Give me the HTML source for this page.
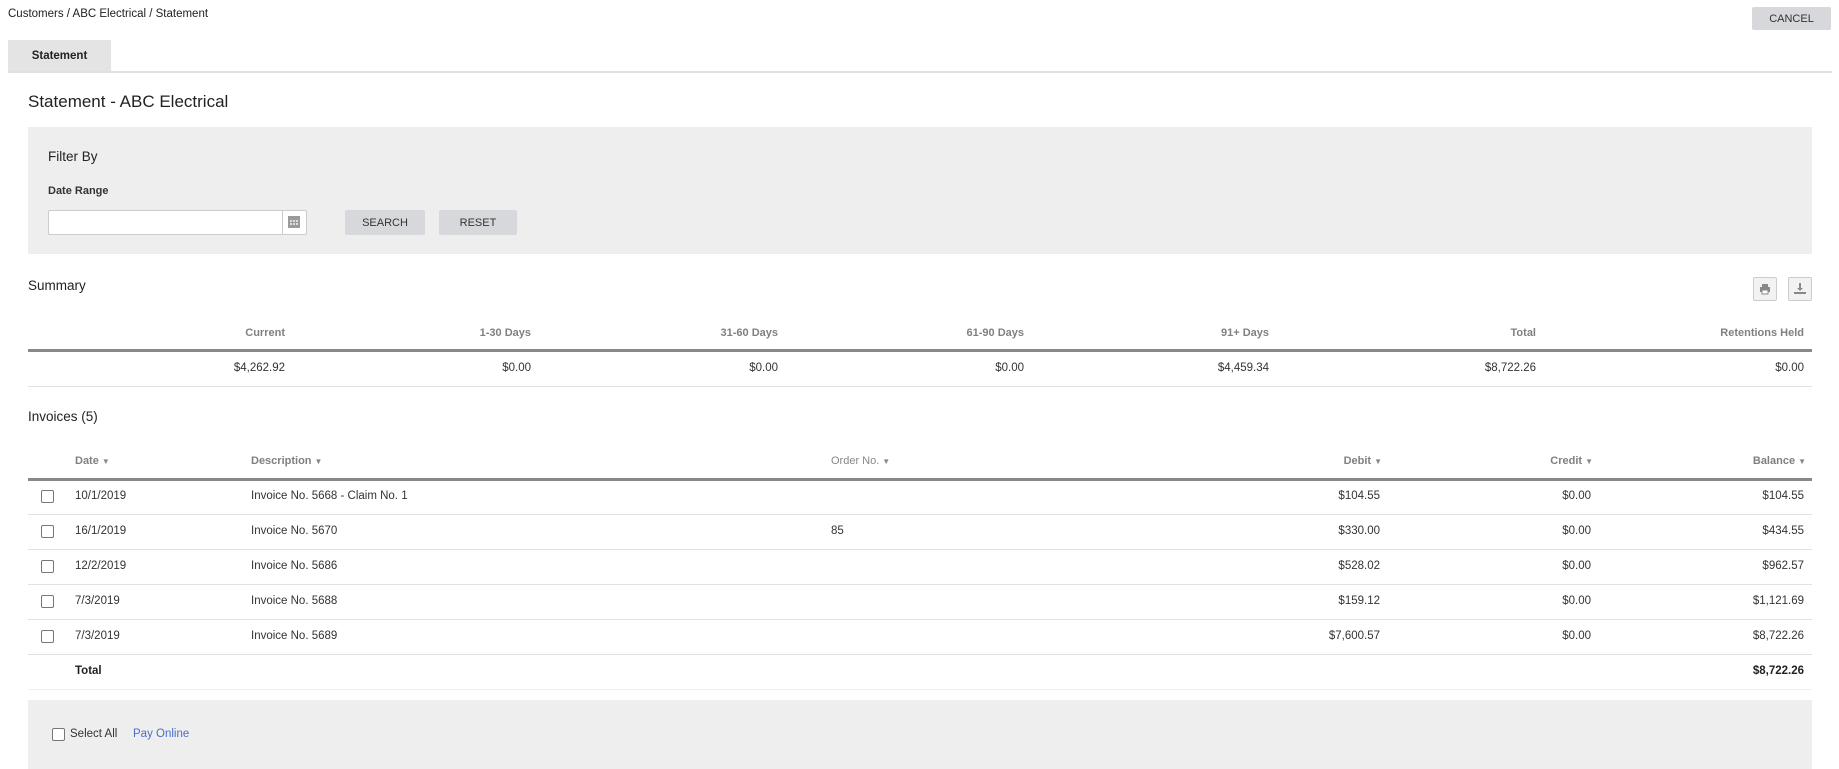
<!DOCTYPE html>
<html><head><meta charset="utf-8">
<style>
*{box-sizing:border-box;margin:0;padding:0}
body{width:1839px;height:769px;background:#fff;font-family:"Liberation Sans",Arial,sans-serif;color:#333;position:relative;overflow:hidden;font-size:11.5px}
.a{position:absolute;white-space:nowrap}
.btn{position:absolute;background:#d6d8db;border-radius:2px;font-size:11px;color:#333;display:flex;align-items:center;justify-content:center}
.hdr{color:#808080;font-weight:bold;font-size:11px}
.r{text-align:right}
.cb{position:absolute;width:13px;height:13px;border:1px solid #777;border-radius:2px;background:#fff}
.line{position:absolute;left:28px;width:1784px;height:1px;background:#e2e2e2}
.thick{position:absolute;left:28px;width:1784px;height:3px;background:#888}
.arr{font-size:8px;color:#888;margin-left:3px}
</style></head><body>
<div class="a" style="left:8px;top:8px;font-size:11.5px;color:#222">Customers / ABC Electrical / Statement</div>
<div class="btn" style="left:1752px;top:7px;width:79px;height:23px">CANCEL</div>
<div class="a" style="left:8px;top:40px;width:103px;height:32px;background:#e4e4e4;font-weight:bold;font-size:11.5px;display:flex;align-items:center;justify-content:center;color:#222">Statement</div>
<div class="a" style="left:8px;top:71px;width:1824px;height:2px;background:#e0e0e0"></div>
<div class="a" style="left:28px;top:92px;font-size:17px;color:#222">Statement - ABC Electrical</div>

<div class="a" style="left:28px;top:127px;width:1784px;height:127px;background:#eeeeee"></div>
<div class="a" style="left:48px;top:149px;font-size:13.5px;color:#222">Filter By</div>
<div class="a" style="left:48px;top:185px;font-size:11px;font-weight:bold;color:#333">Date Range</div>
<div class="a" style="left:48px;top:210px;width:259px;height:25px;background:#fff;border:1px solid #ccc;border-radius:2px"></div>
<div class="a" style="left:282px;top:210px;width:25px;height:25px;border-left:1px solid #ccc"></div>
<svg class="a" style="left:287px;top:215px" width="14" height="14" viewBox="0 0 14 14"><rect x="1" y="1" width="12" height="12" fill="#9a9a9a"/><g fill="#ddd"><rect x="3" y="5" width="2" height="2"/><rect x="6" y="5" width="2" height="2"/><rect x="9" y="5" width="2" height="2"/><rect x="3" y="8" width="2" height="2"/><rect x="6" y="8" width="2" height="2"/><rect x="9" y="8" width="2" height="2"/></g></svg>
<div class="btn" style="left:345px;top:210px;width:80px;height:25px">SEARCH</div>
<div class="btn" style="left:439px;top:210px;width:78px;height:25px">RESET</div>

<div class="a" style="left:28px;top:278px;font-size:13.5px;color:#222">Summary</div>
<div class="a" style="left:1753px;top:277px;width:24px;height:24px;border:1px solid #ccc;border-radius:2px;background:#f2f2f2"></div>
<svg class="a" style="left:1758px;top:282px" width="14" height="14" viewBox="0 0 14 14"><rect x="4" y="2" width="6" height="3" fill="#888"/><rect x="2" y="5" width="10" height="5" fill="#888"/><rect x="4" y="8" width="6" height="4" fill="#fff" stroke="#888"/></svg>
<div class="a" style="left:1788px;top:277px;width:24px;height:24px;border:1px solid #ccc;border-radius:2px;background:#f2f2f2"></div>
<svg class="a" style="left:1793px;top:282px" width="14" height="14" viewBox="0 0 14 14"><rect x="6" y="1" width="2" height="6" fill="#888"/><path d="M4 6h6l-3 3z" fill="#888"/><rect x="1" y="10" width="12" height="2" fill="#888"/></svg>

<div class="a hdr r" style="right:1554px;top:327px">Current</div>
<div class="a hdr r" style="right:1308px;top:327px">1-30 Days</div>
<div class="a hdr r" style="right:1061px;top:327px">31-60 Days</div>
<div class="a hdr r" style="right:815px;top:327px">61-90 Days</div>
<div class="a hdr r" style="right:570px;top:327px">91+ Days</div>
<div class="a hdr r" style="right:303px;top:327px">Total</div>
<div class="a hdr r" style="right:35px;top:327px">Retentions Held</div>
<div class="thick" style="top:349px"></div>
<div class="a r" style="right:1554px;top:362px">$4,262.92</div>
<div class="a r" style="right:1308px;top:362px">$0.00</div>
<div class="a r" style="right:1061px;top:362px">$0.00</div>
<div class="a r" style="right:815px;top:362px">$0.00</div>
<div class="a r" style="right:570px;top:362px">$4,459.34</div>
<div class="a r" style="right:303px;top:362px">$8,722.26</div>
<div class="a r" style="right:35px;top:362px">$0.00</div>
<div class="line" style="top:386px"></div>

<div class="a" style="left:28px;top:409px;font-size:13.5px;color:#222">Invoices (5)</div>
<div class="a hdr" style="left:75px;top:455px">Date<span class="arr">▼</span></div>
<div class="a hdr" style="left:251px;top:455px">Description<span class="arr">▼</span></div>
<div class="a" style="left:831px;top:455px;color:#888;font-size:11px">Order No.<span class="arr">▼</span></div>
<div class="a hdr r" style="right:457px;top:455px">Debit<span class="arr">▼</span></div>
<div class="a hdr r" style="right:246px;top:455px">Credit<span class="arr">▼</span></div>
<div class="a hdr r" style="right:33px;top:455px">Balance<span class="arr">▼</span></div>
<div class="thick" style="top:478px"></div>

<div class="cb" style="left:41px;top:490px"></div>
<div class="a" style="left:75px;top:490px">10/1/2019</div>
<div class="a" style="left:251px;top:490px">Invoice No. 5668 - Claim No. 1</div>
<div class="a r" style="right:459px;top:490px">$104.55</div>
<div class="a r" style="right:248px;top:490px">$0.00</div>
<div class="a r" style="right:35px;top:490px">$104.55</div>
<div class="line" style="top:514px"></div>

<div class="cb" style="left:41px;top:525px"></div>
<div class="a" style="left:75px;top:525px">16/1/2019</div>
<div class="a" style="left:251px;top:525px">Invoice No. 5670</div>
<div class="a" style="left:831px;top:525px">85</div>
<div class="a r" style="right:459px;top:525px">$330.00</div>
<div class="a r" style="right:248px;top:525px">$0.00</div>
<div class="a r" style="right:35px;top:525px">$434.55</div>
<div class="line" style="top:549px"></div>

<div class="cb" style="left:41px;top:560px"></div>
<div class="a" style="left:75px;top:560px">12/2/2019</div>
<div class="a" style="left:251px;top:560px">Invoice No. 5686</div>
<div class="a r" style="right:459px;top:560px">$528.02</div>
<div class="a r" style="right:248px;top:560px">$0.00</div>
<div class="a r" style="right:35px;top:560px">$962.57</div>
<div class="line" style="top:584px"></div>

<div class="cb" style="left:41px;top:595px"></div>
<div class="a" style="left:75px;top:595px">7/3/2019</div>
<div class="a" style="left:251px;top:595px">Invoice No. 5688</div>
<div class="a r" style="right:459px;top:595px">$159.12</div>
<div class="a r" style="right:248px;top:595px">$0.00</div>
<div class="a r" style="right:35px;top:595px">$1,121.69</div>
<div class="line" style="top:619px"></div>

<div class="cb" style="left:41px;top:630px"></div>
<div class="a" style="left:75px;top:630px">7/3/2019</div>
<div class="a" style="left:251px;top:630px">Invoice No. 5689</div>
<div class="a r" style="right:459px;top:630px">$7,600.57</div>
<div class="a r" style="right:248px;top:630px">$0.00</div>
<div class="a r" style="right:35px;top:630px">$8,722.26</div>
<div class="line" style="top:654px"></div>

<div class="a" style="left:75px;top:665px;font-weight:bold;color:#222">Total</div>
<div class="a r" style="right:35px;top:665px;font-weight:bold;color:#222">$8,722.26</div>
<div class="line" style="top:689px;background:#f0f0f0"></div>

<div class="a" style="left:28px;top:700px;width:1784px;height:69px;background:#eeeeee"></div>
<div class="cb" style="left:52px;top:728px"></div>
<div class="a" style="left:70px;top:728px">Select All</div>
<div class="a" style="left:133px;top:728px;color:#4a6fc8">Pay Online</div>
</body></html>
